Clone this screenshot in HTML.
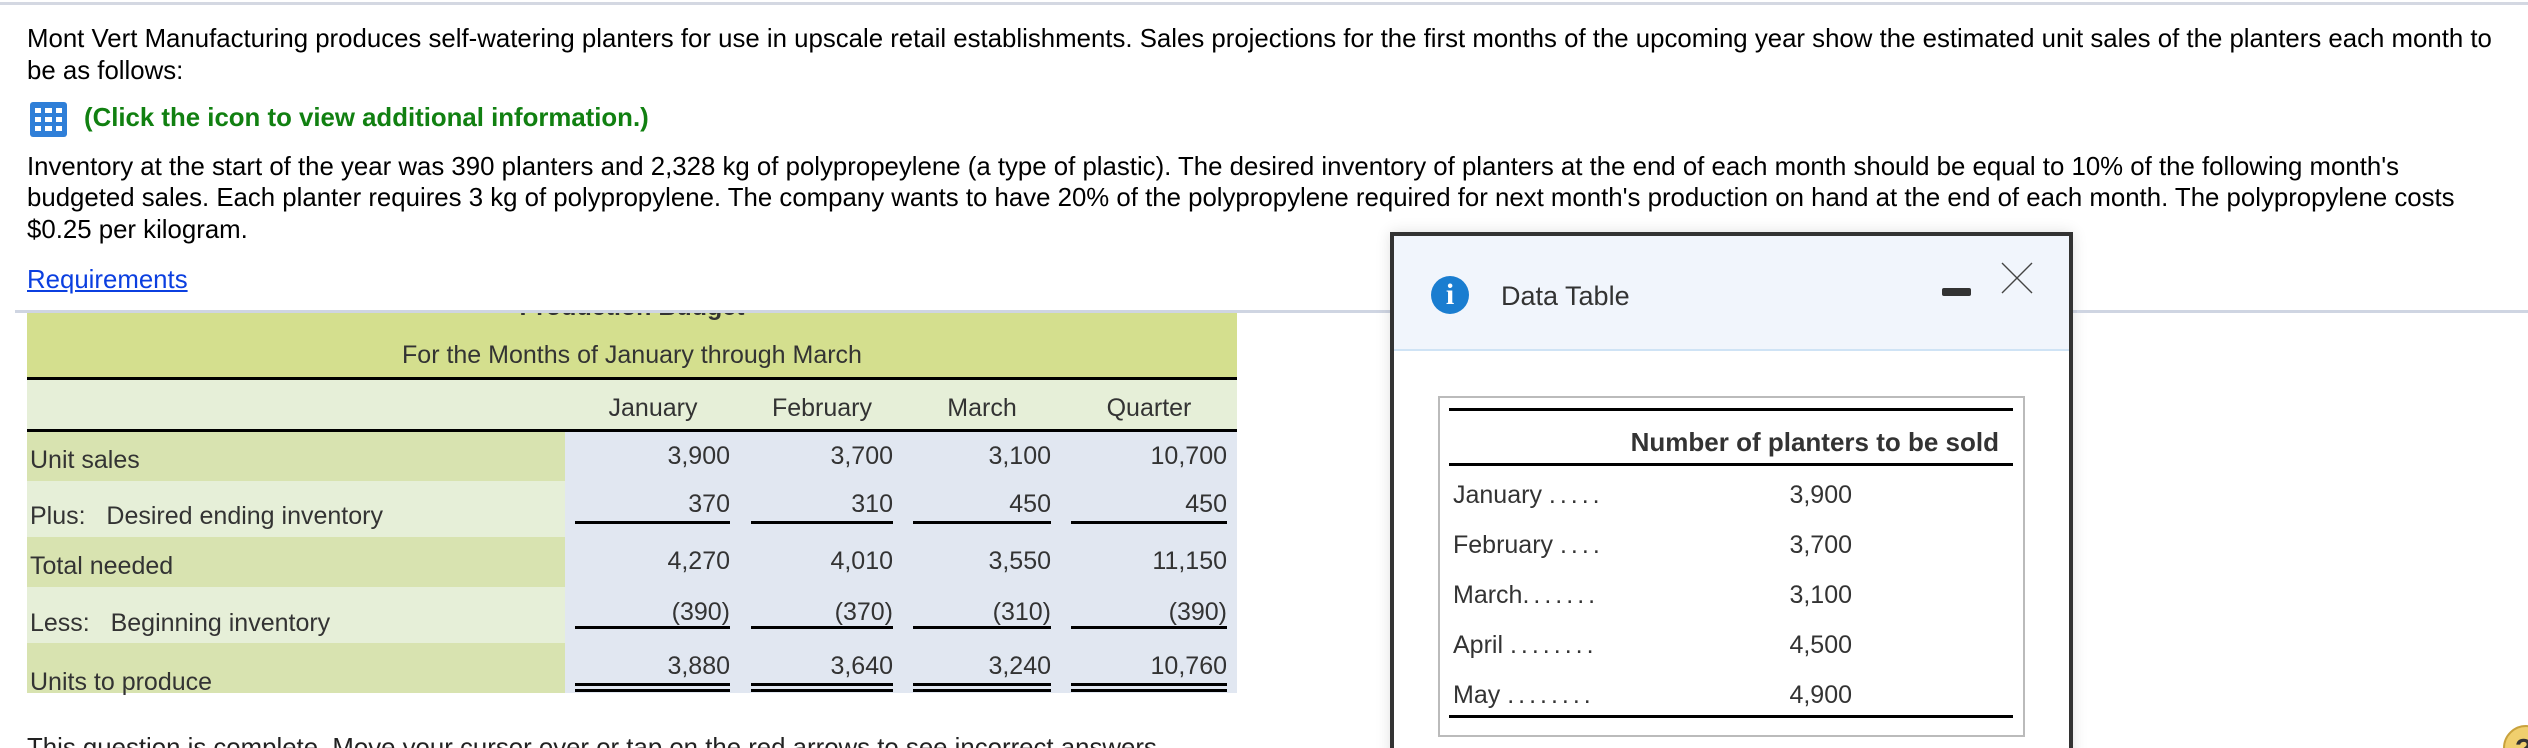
<!DOCTYPE html>
<html style="width:2528px;height:748px;overflow:hidden"><head><meta charset="utf-8"><style>
*{margin:0;padding:0;box-sizing:border-box}
body{width:2528px;height:748px;overflow:hidden;background:#fff;font-family:"Liberation Sans",Arial,sans-serif;color:#000;position:relative}
.a{position:absolute;white-space:nowrap}
.p{font-size:25.8px;line-height:32px}
.t{font-size:25px;color:#333}
.r{text-align:right}
.ul{position:absolute;height:3px;background:#000}
.d{letter-spacing:4px}
</style></head><body>
<div class="a" style="left:0;top:2px;width:2528px;height:3px;background:#d4d8e2"></div>
<div class="a p" style="left:27px;top:23px">Mont Vert Manufacturing produces self-watering planters for use in upscale retail establishments. Sales projections for the first months of the upcoming year show the estimated unit sales of the planters each month to</div>
<div class="a p" style="left:27px;top:55px">be as follows:</div>
<div class="a" style="left:30px;top:102px;width:37px;height:35px;background:#2f7fd8;border-radius:3px;padding:6px 5px;display:grid;grid-template-columns:repeat(3,1fr);grid-gap:4px">
<i style="background:#fff"></i><i style="background:#fff"></i><i style="background:#fff"></i><i style="background:#fff"></i><i style="background:#fff"></i><i style="background:#fff"></i><i style="background:#fff"></i><i style="background:#fff"></i><i style="background:#fff"></i></div>
<div class="a p" style="left:84px;top:102px;color:#118011;font-weight:bold">(Click the icon to view additional information.)</div>
<div class="a p" style="left:27px;top:151px">Inventory at the start of the year was 390 planters and 2,328 kg of polypropeylene (a type of plastic). The desired inventory of planters at the end of each month should be equal to 10% of the following month's</div>
<div class="a p" style="left:27px;top:182px">budgeted sales. Each planter requires 3 kg of polypropylene. The company wants to have 20% of the polypropylene required for next month's production on hand at the end of each month. The polypropylene costs</div>
<div class="a p" style="left:27px;top:214px">$0.25 per kilogram.</div>
<div class="a p" style="left:27px;top:264px;color:#0b3fe0;text-decoration:underline">Requirements</div>
<div class="a" style="left:15px;top:310px;width:2513px;height:3px;background:#cfd5e2"></div>

<!-- production budget -->
<div class="a" style="left:27px;top:313px;width:1210px;height:64px;background:#d4df8e;overflow:hidden">
<div class="a t" style="left:0;width:1210px;text-align:center;top:-20px;font-weight:bold">Production Budget</div>
<div class="a t" style="left:0;width:1210px;text-align:center;top:28px">For the Months of January through March</div></div>
<div class="a" style="left:27px;top:377px;width:1210px;height:3px;background:#000"></div>
<div class="a" style="left:27px;top:380px;width:1210px;height:49px;background:#e6efd8"></div>
<div class="a t" style="left:566px;width:164px;top:394px;text-align:center;padding-left:10px">January</div>
<div class="a t" style="left:751px;width:142px;top:394px;text-align:center">February</div>
<div class="a t" style="left:913px;width:138px;top:394px;text-align:center">March</div>
<div class="a t" style="left:1071px;width:156px;top:394px;text-align:center">Quarter</div>
<div class="a" style="left:27px;top:429px;width:1210px;height:3px;background:#000"></div>
<div class="a" style="left:565px;top:432px;width:672px;height:261px;background:#e1e7f1"></div>
<div class="a" style="left:27px;top:432px;width:538px;height:49px;background:#d8e3b0"></div>
<div class="a" style="left:27px;top:481px;width:538px;height:56px;background:#e6efd8"></div>
<div class="a" style="left:27px;top:537px;width:538px;height:50px;background:#d8e3b0"></div>
<div class="a" style="left:27px;top:587px;width:538px;height:56px;background:#e6efd8"></div>
<div class="a" style="left:27px;top:643px;width:538px;height:50px;background:#d8e3b0"></div>
<div class="a t" style="left:30px;top:446px">Unit sales</div>
<div class="a t" style="left:30px;top:502px">Plus:&nbsp;&nbsp;&nbsp;Desired ending inventory</div>
<div class="a t" style="left:30px;top:552px">Total needed</div>
<div class="a t" style="left:30px;top:609px">Less:&nbsp;&nbsp;&nbsp;Beginning inventory</div>
<div class="a t" style="left:30px;top:668px">Units to produce</div>

<div class="a t r" style="left:575px;width:155px;top:442px">3,900</div>
<div class="a t r" style="left:751px;width:142px;top:442px">3,700</div>
<div class="a t r" style="left:913px;width:138px;top:442px">3,100</div>
<div class="a t r" style="left:1071px;width:156px;top:442px">10,700</div>

<div class="a t r" style="left:575px;width:155px;top:490px">370</div>
<div class="a t r" style="left:751px;width:142px;top:490px">310</div>
<div class="a t r" style="left:913px;width:138px;top:490px">450</div>
<div class="a t r" style="left:1071px;width:156px;top:490px">450</div>
<div class="ul" style="left:575px;width:155px;top:521px"></div>
<div class="ul" style="left:751px;width:142px;top:521px"></div>
<div class="ul" style="left:913px;width:138px;top:521px"></div>
<div class="ul" style="left:1071px;width:156px;top:521px"></div>

<div class="a t r" style="left:575px;width:155px;top:547px">4,270</div>
<div class="a t r" style="left:751px;width:142px;top:547px">4,010</div>
<div class="a t r" style="left:913px;width:138px;top:547px">3,550</div>
<div class="a t r" style="left:1071px;width:156px;top:547px">11,150</div>

<div class="a t r" style="left:575px;width:155px;top:598px">(390)</div>
<div class="a t r" style="left:751px;width:142px;top:598px">(370)</div>
<div class="a t r" style="left:913px;width:138px;top:598px">(310)</div>
<div class="a t r" style="left:1071px;width:156px;top:598px">(390)</div>
<div class="ul" style="left:575px;width:155px;top:626px"></div>
<div class="ul" style="left:751px;width:142px;top:626px"></div>
<div class="ul" style="left:913px;width:138px;top:626px"></div>
<div class="ul" style="left:1071px;width:156px;top:626px"></div>

<div class="a t r" style="left:575px;width:155px;top:652px">3,880</div>
<div class="a t r" style="left:751px;width:142px;top:652px">3,640</div>
<div class="a t r" style="left:913px;width:138px;top:652px">3,240</div>
<div class="a t r" style="left:1071px;width:156px;top:652px">10,760</div>
<div class="ul" style="left:575px;width:155px;top:683px"></div><div class="ul" style="left:575px;width:155px;top:689px"></div>
<div class="ul" style="left:751px;width:142px;top:683px"></div><div class="ul" style="left:751px;width:142px;top:689px"></div>
<div class="ul" style="left:913px;width:138px;top:683px"></div><div class="ul" style="left:913px;width:138px;top:689px"></div>
<div class="ul" style="left:1071px;width:156px;top:683px"></div><div class="ul" style="left:1071px;width:156px;top:689px"></div>

<div class="a p" style="left:27px;top:732px;color:#222">This question is complete. Move your cursor over or tap on the red arrows to see incorrect answers.</div>

<!-- modal -->
<div class="a" style="left:1390px;top:232px;width:683px;height:530px;border:4px solid #333;background:#fff;box-shadow:0 0 14px rgba(0,0,0,.12)">
<div class="a" style="left:0;top:0;width:675px;height:115px;background:#f1f5fc;border-bottom:2px solid #cfe3f5"></div>
<div class="a" style="left:37px;top:40px;width:38px;height:38px;border-radius:50%;background:#1a7dd0;color:#fff;font-family:'Liberation Serif',serif;font-weight:bold;font-size:30px;text-align:center;line-height:38px">i</div>
<div class="a" style="left:107px;top:45px;font-size:27px;color:#333">Data Table</div>
<div class="a" style="left:548px;top:52px;width:29px;height:8px;background:#333;border-radius:2px"></div>
<svg class="a" style="left:606px;top:26px" width="34" height="32"><path d="M2 1L32 31M32 1L2 31" stroke="#444" stroke-width="1.4" fill="none"/></svg>
<div class="a" style="left:44px;top:160px;width:587px;height:341px;border:2px solid #bbb"></div>
<div class="a" style="left:55px;top:172px;width:564px;height:3px;background:#000"></div>
<div class="a t" style="left:55px;width:550px;top:191px;text-align:right;font-weight:bold;font-size:26px">Number of planters to be sold</div>
<div class="a" style="left:55px;top:227px;width:564px;height:3px;background:#000"></div>
<div class="a t" style="left:59px;top:245px">January <span class="d">.....</span></div><div class="a t r" style="left:300px;width:158px;top:245px">3,900</div>
<div class="a t" style="left:59px;top:295px">February <span class="d">....</span></div><div class="a t r" style="left:300px;width:158px;top:295px">3,700</div>
<div class="a t" style="left:59px;top:345px">March<span class="d">.......</span></div><div class="a t r" style="left:300px;width:158px;top:345px">3,100</div>
<div class="a t" style="left:59px;top:395px">April <span class="d">........</span></div><div class="a t r" style="left:300px;width:158px;top:395px">4,500</div>
<div class="a t" style="left:59px;top:445px">May <span class="d">........</span></div><div class="a t r" style="left:300px;width:158px;top:445px">4,900</div>
<div class="a" style="left:55px;top:479px;width:564px;height:3px;background:#000"></div>
</div>
<div class="a" style="left:2077px;top:310px;width:451px;height:3px;background:#cfd5e2"></div>
<div class="a" style="left:2503px;top:725px;width:46px;height:46px;border-radius:50%;background:#f0cf6e;border:2px solid #c9a23c;font-weight:bold;font-size:28px;color:#333;padding-left:10px;line-height:44px">?</div>
</body></html>
